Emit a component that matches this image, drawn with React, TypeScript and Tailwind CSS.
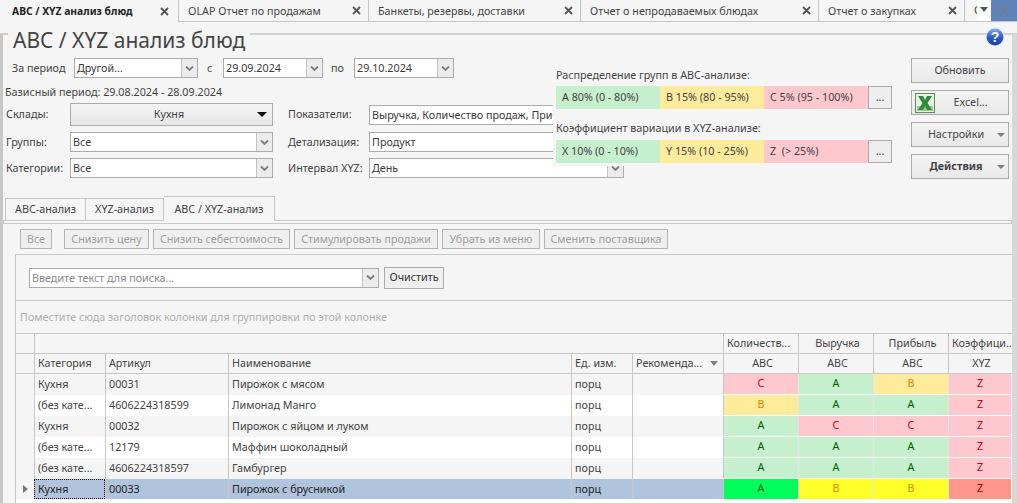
const FONT = "font-['Noto_Sans','DejaVu_Sans',sans-serif]";

function Chevron() {
  return (
    <svg width="9" height="7" viewBox="0 0 9 7">
      <path d="M1 1.5 L4.5 5 L8 1.5" fill="none" stroke="#7d7d7d" strokeWidth="1.8" />
    </svg>
  );
}

function Combo({ value, className, muted }: { value: string; className: string; muted?: boolean }) {
  return (
    <div className={`flex h-[20px] border border-[#acacac] bg-white ${className}`}>
      <span className={`flex-1 overflow-hidden whitespace-nowrap pl-[2px] leading-[18px] ${muted ? "text-[#8a8a8a]" : "text-[#3a3a3a]"}`}>{value}</span>
      <span className="flex w-[16px] shrink-0 items-center justify-center border-l border-[#c4c4c4] bg-[#ececec]">
        <Chevron />
      </span>
    </div>
  );
}

function Tab({ label, width, active }: { label: string; width: string; active?: boolean }) {
  return (
    <div className={`flex h-[22px] shrink-0 items-center justify-between ${width} ${active ? "bg-[#f5f5f5] pl-[12px] pr-[9px] text-[10.3px] font-bold text-[#222]" : "border-b border-r border-[#c4c4c4] bg-[#f5f5f5] pl-[9px] pr-[7px] text-[#444]"}`}>
      <span className="overflow-hidden whitespace-nowrap pt-px">{label}</span>
      <svg width="9" height="9" viewBox="0 0 9 9" className="shrink-0">
        <path d="M1 1 L8 8 M8 1 L1 8" stroke="#555" strokeWidth="1.8" />
      </svg>
    </div>
  );
}

function ActionButton({ label, width }: { label: string; width: string }) {
  return (
    <div className={`flex h-[25px] items-center justify-center border border-[#acacac] bg-gradient-to-b from-[#f5f5f5] to-[#e8e8e8] text-[#444] ${width}`}>
      {label}
    </div>
  );
}

function DropButton({ label, bold }: { label: string; bold?: boolean }) {
  return (
    <div className="flex h-[25px] w-[98px] items-center border border-[#acacac] bg-gradient-to-b from-[#f5f5f5] to-[#e8e8e8] text-[#444]">
      <span className={`flex-1 pl-[3px] text-center ${bold ? "font-bold" : ""}`}>{label}</span>
      <span className="mr-[3px] h-0 w-0 border-x-[4px] border-t-[4px] border-x-transparent border-t-[#808080]" />
    </div>
  );
}

function DisabledButton({ label, width }: { label: string; width: string }) {
  return (
    <div className={`flex h-[20px] items-center justify-center border border-[#b4b4b4] bg-[#efefef] text-[#a0a0a0] ${width}`}>{label}</div>
  );
}

function Ranges({ cells }: { cells: string[] }) {
  const colors = ["bg-[#c6efce]", "bg-[#ffeb9c]", "bg-[#ffc7ce]"];
  return (
    <div className="flex h-[23px] pl-[3px]">
      {cells.map((c, i) => (
        <div key={c} className={`flex w-[104px] items-center whitespace-pre pl-[6px] text-[#444] ${colors[i]}`}>{c}</div>
      ))}
      <div className="flex w-[24px] items-center justify-center border border-[#acacac] bg-[#eeeeee] text-[#444]">...</div>
    </div>
  );
}

const cols = "grid-cols-[18px_71px_123px_343px_61px_91px_75px_75px_75px_63px]";

const rows = [
  { cat: "Кухня", code: "00031", name: "Пирожок с мясом", g: "CABZ" },
  { cat: "(без кате...", code: "4606224318599", name: "Лимонад Манго", g: "BAAZ" },
  { cat: "Кухня", code: "00032", name: "Пирожок с яйцом и луком", g: "ACCZ" },
  { cat: "(без кате...", code: "12179", name: "Маффин шоколадный", g: "AAAZ" },
  { cat: "(без кате...", code: "4606224318597", name: "Гамбургер", g: "AAAZ" },
  { cat: "Кухня", code: "00033", name: "Пирожок с брусникой", g: "ABBZ" },
];

function gradeClass(g: string, selected: boolean) {
  if (g === "A") return selected ? "bg-[#00ff5a] text-[#006100]" : "bg-[#c6efce] text-[#006100]";
  if (g === "B") return selected ? "bg-[#ffff2a] text-[#d98a00]" : "bg-[#ffeb9c] text-[#d98a00]";
  return selected ? "bg-[#ff968c] text-[#9c0006]" : "bg-[#ffc7ce] text-[#c00010]";
}

function HeadCell({ children, className = "" }: { children?: React.ReactNode; className?: string }) {
  return <div className={`overflow-hidden whitespace-nowrap border-l border-[#c8c8c8] pl-[3px] leading-[19px] ${className}`}>{children}</div>;
}

export default function App() {
  return (
    <div className={`relative h-[503px] w-[1017px] overflow-hidden bg-white text-[10.75px] text-[#444] ${FONT}`}>
      {/* document tabs */}
      <div className="flex h-[22px] bg-[#f5f5f5]">
        <Tab label="ABC / XYZ анализ блюд" width="w-[178px]" active />
        <Tab label="OLAP Отчет по продажам" width="w-[191px] border-l border-l-[#c4c4c4]" />
        <Tab label="Банкеты, резервы, доставки" width="w-[212px]" />
        <Tab label="Отчет о непродаваемых блюдах" width="w-[238px]" />
        <Tab label="Отчет о закупках" width="w-[146px]" />
        <div className="flex flex-1 items-center border-b border-[#c4c4c4] pl-[9px] text-[#444]">
          <span className="w-[4px] overflow-hidden">О</span>
        </div>
      </div>
      <div className="absolute right-0 top-0 flex h-[21px]">
        <div className="flex w-[14px] justify-center bg-white pt-[7px]">
          <span className="h-0 w-0 border-x-[4px] border-t-[5px] border-x-transparent border-t-[#555]" />
        </div>
        <div className="flex w-[26px] items-center justify-center bg-[#5f85b8]">
          <svg width="10" height="10" viewBox="0 0 10 10">
            <path d="M1 1 L9 9 M9 1 L1 9" stroke="#6f7f94" strokeWidth="2" />
          </svg>
        </div>
      </div>

      {/* report panel */}
      <div className="h-[11px] bg-[#f5f5f5]" />
      <div className="h-[470px] border-l-[3px] border-r-[5px] border-t-2 border-l-[#c8c8c8] border-r-[#d8d8d8] border-t-[#d0d0d0] bg-[#f5f5f5]">
        <div className="relative">
          <h1 className="-mt-[7px] ml-[5px] w-fit bg-[#f5f5f5] px-[5px] text-[21px] font-normal leading-[24px] text-[#444]">ABC / XYZ анализ блюд</h1>
          <svg width="20" height="20" viewBox="0 0 20 20" className="absolute right-[7px] top-[-1px]">
            <defs>
              <linearGradient id="help" x1="0" y1="0" x2="0" y2="1">
                <stop offset="0" stopColor="#8fb0ee" />
                <stop offset="0.5" stopColor="#2f5fd0" />
                <stop offset="1" stopColor="#1a3aa0" />
              </linearGradient>
            </defs>
            <circle cx="10" cy="10" r="9" fill="url(#help)" stroke="#e4e8f0" strokeWidth="1.2" />
            <text x="10" y="15" textAnchor="middle" fontSize="14" fontWeight="700" fill="#fff" fontFamily="Liberation Sans">?</text>
          </svg>
        </div>

        <div className="flex justify-between pr-[3px]">
          {/* filter form */}
          <div className="w-[621px]">
            <div className="mt-[6px] flex h-[20px] items-center">
              <span className="ml-[9px] w-[62px]">За период</span>
              <Combo value="Другой..." className="w-[124px]" />
              <span className="ml-[9px] w-[16px]">с</span>
              <Combo value="29.09.2024" className="w-[100px]" />
              <span className="ml-[8px] w-[23px]">по</span>
              <Combo value="29.10.2024" className="w-[100px]" />
            </div>
            <div className="ml-[2px] mt-[6px] h-[16px] leading-[16px]">Базисный период: 29.08.2024 - 28.09.2024</div>
            <div className="mt-[3px] grid grid-cols-[67px_203px_15px_81px_255px] items-center gap-y-[6px]">
              <span className="col-start-1 pl-[3px]">Склады:</span>
              <div className="flex h-[23px] items-center border border-[#acacac] bg-gradient-to-b from-[#f5f5f5] to-[#e6e6e6]">
                <span className="flex-1 pl-[10px] text-center">Кухня</span>
                <span className="mr-[5px] h-0 w-0 border-x-[5px] border-t-[5px] border-x-transparent border-t-black" />
              </div>
              <span className="col-start-4">Показатели:</span>
              <div className="h-[20px] border border-[#acacac] bg-white pl-[2px] leading-[18px] text-[#3a3a3a]">Выручка, Количество продаж, Прибыль</div>
              <span className="col-start-1 pl-[3px]">Группы:</span>
              <Combo value="Все" className="" />
              <span className="col-start-4">Детализация:</span>
              <Combo value="Продукт" className="" />
              <span className="col-start-1 pl-[3px]">Категории:</span>
              <Combo value="Все" className="" />
              <span className="col-start-4">Интервал XYZ:</span>
              <Combo value="День" className="" />
            </div>
          </div>

          {/* right buttons */}
          <div className="flex w-[98px] flex-col gap-[7px] pt-[6px]">
            <ActionButton label="Обновить" width="w-full" />
            <div className="flex h-[25px] items-center border border-[#acacac] bg-gradient-to-b from-[#f5f5f5] to-[#e8e8e8]">
              <svg width="20" height="20" viewBox="0 0 20 20" className="ml-[3px] shrink-0">
                <rect x="0.5" y="0.5" width="19" height="19" fill="#e8f1e2" stroke="#5d8f5d" />
                <rect x="2" y="13" width="16" height="5" fill="#9ccb8c" />
                <path d="M3 3 H8 L10 7 L12 3 H17 L12.5 10 L17 17 H12 L10 13 L8 17 H3 L7.5 10 Z" fill="#2e8b3e" />
              </svg>
              <span className="flex-1 pr-[2px] text-center">Excel...</span>
            </div>
            <DropButton label="Настройки" />
            <DropButton label="Действия" bold />
          </div>
        </div>

        {/* ranges overlay */}
        <div className="absolute left-[553px] top-[65px] h-[101px] w-[342px] bg-[#f5f5f5]">
          <div className="h-[21px] pl-[3px] pt-[2px]">Распределение групп в ABC-анализе:</div>
          <Ranges cells={["A 80% (0 - 80%)", "B 15% (80 - 95%)", "C 5% (95 - 100%)"]} />
          <div className="mt-[10px] h-[21px] pl-[3px] pt-[1px]">Коэффициент вариации в XYZ-анализе:</div>
          <Ranges cells={["X 10% (0 - 10%)", "Y 15% (10 - 25%)", "Z  (> 25%)"]} />
        </div>

        {/* analysis tabs */}
        <div className="mt-[17px] flex h-[24px] items-end pl-[2px]">
          <div className="flex h-[22px] w-[81px] items-center justify-center border border-b-0 border-[#c8c8c8]">ABC-анализ</div>
          <div className="flex h-[22px] w-[78px] items-center justify-center border border-b-0 border-l-0 border-[#c8c8c8]">XYZ-анализ</div>
          <div className="relative -mb-px flex h-[25px] w-[111px] items-start justify-center border border-b-0 border-l-0 border-[#c8c8c8] bg-[#f5f5f5] pt-[4px]">ABC / XYZ-анализ</div>
        </div>
        <div className="h-[4px] border border-[#c8c8c8]" />

        <div className="ml-[17px] mt-[5px] flex gap-[4px]">
          <DisabledButton label="Все" width="mr-[8px] w-[32px]" />
          <DisabledButton label="Снизить цену" width="w-[85px]" />
          <DisabledButton label="Снизить себестоимость" width="w-[137px]" />
          <DisabledButton label="Стимулировать продажи" width="w-[144px]" />
          <DisabledButton label="Убрать из меню" width="w-[98px]" />
          <DisabledButton label="Сменить поставщика" width="w-[124px]" />
        </div>

        {/* grid */}
        <div className="ml-[12px] mt-[5px] border-l border-t border-[#c8c8c8]">
          <div className="flex h-[46px] items-center gap-[5px] border-b border-[#c8c8c8] pl-[13px]">
            <Combo value="Введите текст для поиска..." className="w-[350px]" muted />
            <div className="flex h-[22px] w-[60px] items-center justify-center border border-[#acacac] bg-[#f0f0f0] text-[#333]">Очистить</div>
          </div>
          <div className="flex h-[33px] items-center border-b border-[#c8c8c8] pl-[4px] text-[#b0b0b0]">Поместите сюда заголовок колонки для группировки по этой колонке</div>

          <div className={`grid h-[19px] ${cols}`}>
            <div className="col-span-5 col-start-2 border-l border-[#c8c8c8]" />
            <HeadCell className="pl-[3px]">Количеств...</HeadCell>
            <HeadCell className="text-center">Выручка</HeadCell>
            <HeadCell className="text-center">Прибыль</HeadCell>
            <HeadCell className="text-center">Коэффици...</HeadCell>
          </div>
          <div className={`grid h-[21px] border-y border-[#c8c8c8] ${cols}`}>
            <div />
            <HeadCell>Категория</HeadCell>
            <HeadCell>Артикул</HeadCell>
            <HeadCell>Наименование</HeadCell>
            <HeadCell>Ед. изм.</HeadCell>
            <HeadCell className="relative">
              Рекоменда...
              <span className="absolute right-[5px] top-[7px] h-0 w-0 border-x-[4px] border-t-[5px] border-x-transparent border-t-[#808080]" />
            </HeadCell>
            <HeadCell className="text-center">ABC</HeadCell>
            <HeadCell className="text-center">ABC</HeadCell>
            <HeadCell className="text-center">ABC</HeadCell>
            <HeadCell className="text-center">XYZ</HeadCell>
          </div>

          {rows.map((r, i) => {
            const selected = i === rows.length - 1;
            const bg = selected ? "bg-[#b0c4de] text-[#222]" : i % 2 === 0 ? "bg-[#f5f5f5]" : "bg-white";
            const cell = `overflow-hidden whitespace-nowrap border-l border-[#c8c8c8] pl-[3px] leading-[20px] ${bg}`;
            return (
              <div key={r.code} className={`grid ${selected ? "h-[20px]" : "h-[21px]"} ${cols}`}>
                <div className="flex items-center justify-center">
                  {selected && <span className="h-0 w-0 border-y-[4px] border-l-[5px] border-y-transparent border-l-[#777]" />}
                </div>
                <div className={`${cell} ${selected ? "outline-1 -outline-offset-1 outline-dotted outline-black" : ""}`}>{r.cat}</div>
                <div className={cell}>{r.code}</div>
                <div className={cell}>{r.name}</div>
                <div className={cell}>порц</div>
                <div className={cell} />
                {r.g.split("").map((g, j) => (
                  <div key={j} className={`border-b border-l text-center leading-[19px] ${selected ? "border-b-0" : "border-b-white"} ${j === 0 ? "border-l-[#c8c8c8]" : "border-l-[#e4e4e4]"} ${gradeClass(g, selected)}`}>{g}</div>
                ))}
              </div>
            );
          })}
          <div className="h-[4px] bg-white" />
        </div>
      </div>
    </div>
  );
}
